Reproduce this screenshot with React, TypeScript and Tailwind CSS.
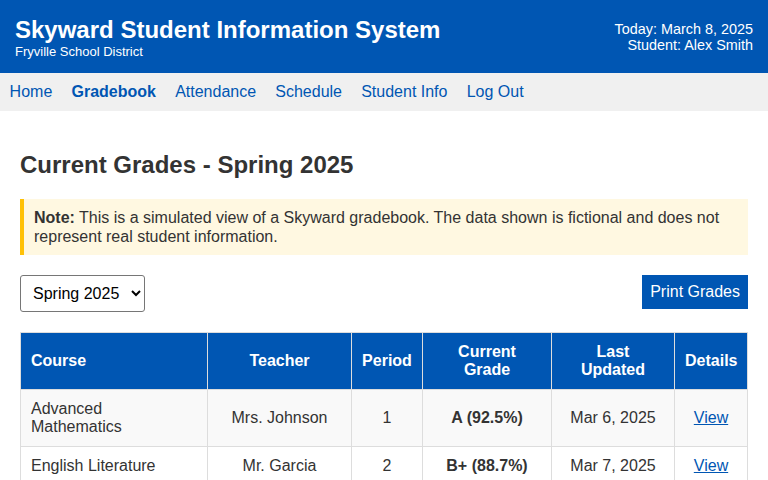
import React from 'react'

type Course = {
  course: string
  teacher: string
  period: number
  grade: string
  updated: string
}

const courses: Course[] = [
  {
    course: 'Advanced Mathematics',
    teacher: 'Mrs. Johnson',
    period: 1,
    grade: 'A (92.5%)',
    updated: 'Mar 6, 2025'
  },
  {
    course: 'English Literature',
    teacher: 'Mr. Garcia',
    period: 2,
    grade: 'B+ (88.7%)',
    updated: 'Mar 7, 2025'
  },
  {
    course: 'Chemistry',
    teacher: 'Dr. Patel',
    period: 3,
    grade: 'A- (90.1%)',
    updated: 'Mar 5, 2025'
  },
  {
    course: 'U.S. History',
    teacher: 'Ms. Thompson',
    period: 4,
    grade: 'B (85.3%)',
    updated: 'Mar 4, 2025'
  }
]

const nav = ['Home', 'Gradebook', 'Attendance', 'Schedule', 'Student Info', 'Log Out']

export default function App() {
  const [term, setTerm] = React.useState('spring-2025')

  return (
    <div className="min-h-screen bg-white font-['Liberation_Sans',Arial,sans-serif] text-[#333]">
      <header className="flex items-center justify-between bg-[#0056b3] px-[15px] h-[73px] text-white">
        <div>
          <h1 className="text-[24px] font-bold leading-[29px]">
            Skyward Student Information System
          </h1>
          <p className="text-[13px] leading-[15px]">Fryville School District</p>
        </div>
        <div className="pt-[1px] text-right text-[14.4px] leading-[16.5px]">
          <div>Today: March 8, 2025</div>
          <div>Student: Alex Smith</div>
        </div>
      </header>

      <nav className="flex bg-[#f0f0f0] h-[38px] items-center">
        {nav.map((item) => (
          <a
            key={item}
            href="#"
            className={
              item === 'Gradebook'
                ? 'px-[9.6px] text-[16px] font-bold text-[#0056b3]'
                : 'px-[9.6px] text-[16px] text-[#0056b3]'
            }
          >
            {item}
          </a>
        ))}
      </nav>

      <main className="p-5">
        <h2 className="mt-5 mb-5 text-[24px] font-bold leading-[28px]">
          Current Grades - Spring 2025
        </h2>

        <div className="border-l-4 border-[#ffc107] bg-[#fff8e1] px-[10px] py-[9px] text-[16px] leading-[19px]">
          <strong>Note:</strong> This is a simulated view of a Skyward gradebook.
          The data shown is fictional and does not represent real student
          information.
        </div>

        <div className="mt-5 flex items-start justify-between">
          <select
            value={term}
            onChange={(e) => setTerm(e.target.value)}
            className="h-[37px] rounded-[3px] border border-[#767676] bg-white px-2 text-[16px] text-black"
          >
            <option value="spring-2025">Spring 2025</option>
            <option value="fall-2024">Fall 2024</option>
          </select>
          <button className="h-[34px] bg-[#0056b3] px-2 text-[16px] text-white">
            Print Grades
          </button>
        </div>

        <table className="mt-5 w-full table-fixed border-collapse text-[16px] leading-[18px]">
          <colgroup>
            <col className="w-[187px]" />
            <col className="w-[144px]" />
            <col className="w-[71px]" />
            <col className="w-[129px]" />
            <col className="w-[123px]" />
            <col />
          </colgroup>
          <thead>
            <tr className="bg-[#0056b3] text-white">
              <th className="border border-[#ddd] p-[10px] text-left">Course</th>
              <th className="border border-[#ddd] p-[10px]">Teacher</th>
              <th className="border border-[#ddd] p-[10px]">Period</th>
              <th className="border border-[#ddd] p-[10px]">Current Grade</th>
              <th className="border border-[#ddd] p-[10px]">
                Last
                <br />
                Updated
              </th>
              <th className="border border-[#ddd] p-[10px]">Details</th>
            </tr>
          </thead>
          <tbody>
            {courses.map((c, i) => (
              <tr key={c.course} className={i % 2 === 0 ? 'bg-[#f9f9f9]' : 'bg-white'}>
                <td className="border border-[#ddd] p-[10px] text-left">{c.course}</td>
                <td className="border border-[#ddd] p-[10px] text-center">{c.teacher}</td>
                <td className="border border-[#ddd] p-[10px] text-center">{c.period}</td>
                <td className="border border-[#ddd] p-[10px] text-center font-bold">{c.grade}</td>
                <td className="border border-[#ddd] p-[10px] text-center">{c.updated}</td>
                <td className="border border-[#ddd] p-[10px] text-center">
                  <a href="#" className="text-[#0056b3] underline">
                    View
                  </a>
                </td>
              </tr>
            ))}
          </tbody>
        </table>
      </main>
    </div>
  )
}
